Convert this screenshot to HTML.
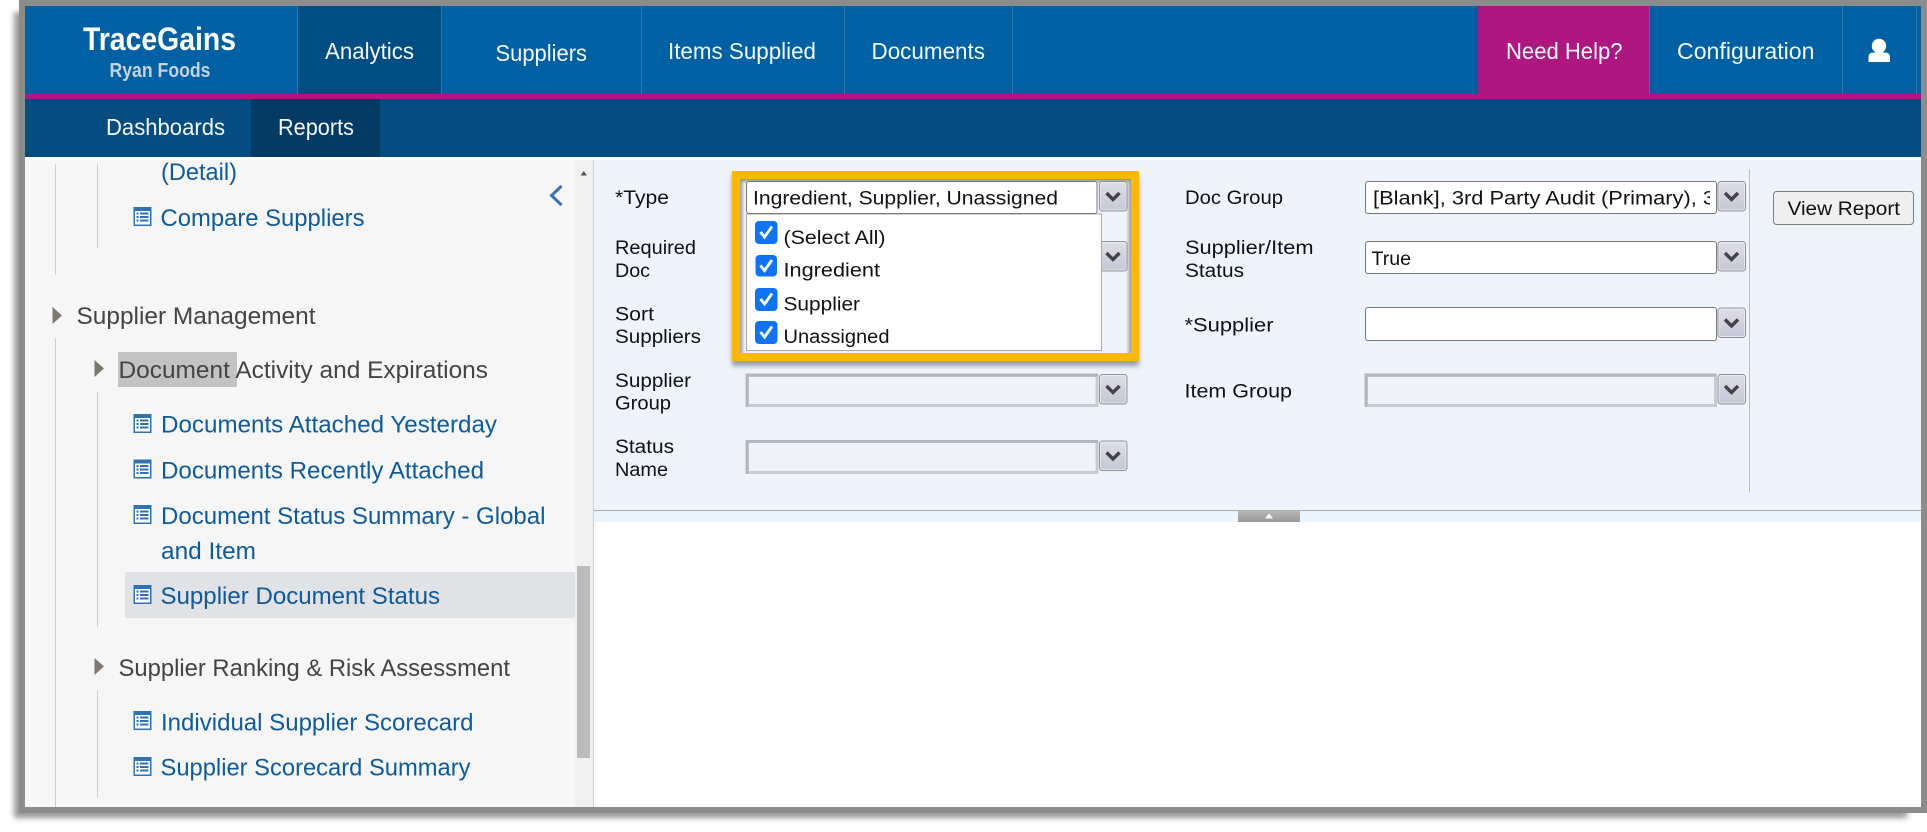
<!DOCTYPE html>
<html lang="en">
<head>
<meta charset="utf-8">
<title>TraceGains Reports</title>
<style>
html,body{margin:0;padding:0;width:1927px;height:832px;overflow:hidden;background:#fff}
svg{display:block}
text{font-family:"Liberation Sans",Arial,sans-serif;white-space:pre}
.nav{font-size:23.5px;fill:#f4f8fb}
.lnk{font-size:24.5px;fill:#0d5a9c}
.hd{font-size:24.5px;fill:#444}
.lb{font-size:19px;fill:#111}
</style>
</head>
<body>
<svg xmlns="http://www.w3.org/2000/svg" width="1927" height="832" viewBox="0 0 1927 832">
<defs>
<filter id="bl" x="-2%" y="-3%" width="104%" height="106%"><feGaussianBlur stdDeviation="3"/></filter>
<filter id="bl2" x="-5%" y="-10%" width="110%" height="120%"><feGaussianBlur stdDeviation="2.5"/></filter>
<linearGradient id="gd" x1="0" y1="0" x2="0" y2="1"><stop offset="0" stop-color="#8f8f8f"/><stop offset="1" stop-color="#8f8f8f" stop-opacity="0"/></linearGradient>
<linearGradient id="gl" x1="0" y1="0" x2="1" y2="0"><stop offset="0" stop-color="#a0a0a0"/><stop offset="1" stop-color="#a0a0a0" stop-opacity="0"/></linearGradient>
<linearGradient id="gr" x1="1" y1="0" x2="0" y2="0"><stop offset="0" stop-color="#a0a0a0"/><stop offset="1" stop-color="#a0a0a0" stop-opacity="0"/></linearGradient>
<linearGradient id="tg" x1="0" y1="0" x2="0" y2="1"><stop offset="0" stop-color="#b8b8b8"/><stop offset="1" stop-color="#989898"/></linearGradient>
<linearGradient id="ab" x1="0" y1="0" x2="0" y2="1"><stop offset="0" stop-color="#dedee8"/><stop offset="1" stop-color="#c6c7d6"/></linearGradient>
<clipPath id="dg"><rect x="1366" y="182" width="344" height="30"/></clipPath>
<g id="ic">
<rect x="0" y="0" width="18" height="19" fill="#2f72b4"/>
<rect x="1.5" y="4" width="15" height="13.5" fill="#fff"/>
<rect x="3" y="5.5" width="2" height="2" fill="#2f72b4"/><rect x="6.5" y="5.5" width="8.5" height="2" fill="#2f72b4"/>
<rect x="3" y="9" width="2" height="2" fill="#2f72b4"/><rect x="6.5" y="9" width="8.5" height="2" fill="#2f72b4"/>
<rect x="3" y="12.5" width="2" height="2" fill="#2f72b4"/><rect x="6.5" y="12.5" width="8.5" height="2" fill="#2f72b4"/>
</g>
<g id="ab1">
<rect x="0.5" y="0.5" width="27.5" height="29.5" rx="3" fill="url(#ab)" stroke="#8f9097"/>
<rect x="1.5" y="1.5" width="25.5" height="27.5" rx="2" fill="none" stroke="#f2f2f6" stroke-opacity=".7"/>
<path d="M7.5 12 L14 18.5 L20.5 12" fill="none" stroke="#424248" stroke-width="3.4"/>
</g>
</defs>

<!-- frame + drop shadow -->
<rect x="14" y="12" width="1893" height="806" fill="#999" filter="url(#bl)"/>
<rect x="19" y="0" width="1908" height="813" fill="#8c8c8c"/>
<rect x="25" y="6" width="1896" height="801" fill="#fff"/>

<!-- top nav -->
<rect x="25" y="6" width="1896" height="88" fill="#0060a4"/>
<rect x="298" y="6" width="143" height="88" fill="#004d82"/>
<rect x="1478" y="6" width="171" height="88" fill="#ae1680"/>
<rect x="25" y="94" width="1896" height="5" fill="#ae1680"/>
<g fill="#3277ad">
<rect x="297" y="6" width="1" height="88"/><rect x="441" y="6" width="1" height="88"/>
<rect x="641" y="6" width="1" height="88"/><rect x="844" y="6" width="1" height="88"/>
<rect x="1012" y="6" width="1" height="88"/><rect x="1649" y="6" width="1" height="88"/>
<rect x="1842" y="6" width="1" height="88"/><rect x="1916" y="6" width="1" height="88"/>
</g>
<text x="83" y="50" font-size="32.5" font-weight="bold" fill="#fff" textLength="153" lengthAdjust="spacingAndGlyphs">TraceGains</text>
<text x="109.5" y="77" font-size="20" font-weight="bold" fill="#c6d3df" textLength="101" lengthAdjust="spacingAndGlyphs">Ryan Foods</text>
<text class="nav" x="325" y="59" textLength="89" lengthAdjust="spacingAndGlyphs">Analytics</text>
<text class="nav" x="495.5" y="61" textLength="91.5" lengthAdjust="spacingAndGlyphs">Suppliers</text>
<text class="nav" x="668" y="59" textLength="148" lengthAdjust="spacingAndGlyphs">Items Supplied</text>
<text class="nav" x="871.5" y="59" textLength="113.5" lengthAdjust="spacingAndGlyphs">Documents</text>
<text class="nav" x="1506" y="59" textLength="116.5" lengthAdjust="spacingAndGlyphs">Need Help?</text>
<text class="nav" x="1677" y="59" textLength="137.5" lengthAdjust="spacingAndGlyphs">Configuration</text>
<circle cx="1879" cy="46" r="7.2" fill="#fff"/>
<path d="M1868.5 62 V57 Q1868.5 52.5 1873.5 52.5 H1884.5 Q1890 52.5 1890 57 V62 Z" fill="#fff"/>

<!-- sub nav -->
<rect x="25" y="99" width="1896" height="58" fill="#054c80"/>
<rect x="251" y="99" width="129" height="58" fill="#033b64"/>
<text class="nav" x="106" y="135" textLength="119" lengthAdjust="spacingAndGlyphs">Dashboards</text>
<text class="nav" x="278" y="135" textLength="76" lengthAdjust="spacingAndGlyphs">Reports</text>

<!-- sidebar -->
<rect x="25" y="160" width="550" height="647" fill="#f6f6f6"/>
<rect x="575" y="160" width="18" height="647" fill="#f0f0f0"/>
<rect x="593" y="160" width="1" height="647" fill="#d0d0d0"/>
<path d="M580.5 175.5 L583.8 171 L587 175.5 Z" fill="#555"/>
<rect x="577" y="566" width="13" height="192" fill="#bcbcbc"/>
<path d="M561.5 186 L551.5 195.5 L561.5 205" fill="none" stroke="#3a74b2" stroke-width="3"/>
<g fill="#cfcfcf">
<rect x="55" y="164" width="1" height="111"/>
<rect x="97" y="164" width="1" height="84"/>
<rect x="55" y="338" width="1" height="469"/>
<rect x="97" y="392" width="1" height="235"/>
<rect x="97" y="690" width="1" height="108"/>
</g>
<rect x="118" y="352" width="119" height="35" fill="#c3c3c3"/>
<rect x="125" y="572" width="450" height="46" fill="#e1e2e5"/>

<g fill="#7d7870">
<path d="M52.5 307 L62 315.5 L52.5 324 Z"/>
<path d="M94.5 360 L104 368.5 L94.5 377 Z"/>
<path d="M94.5 658 L104 666.5 L94.5 675 Z"/>
</g>

<text class="lnk" x="161" y="180" textLength="76" lengthAdjust="spacingAndGlyphs">(Detail)</text>
<use href="#ic" x="133.5" y="207"/>
<text class="lnk" x="160.5" y="226" textLength="204" lengthAdjust="spacingAndGlyphs">Compare Suppliers</text>
<text class="hd" x="76.5" y="324" textLength="239" lengthAdjust="spacingAndGlyphs">Supplier Management</text>
<text class="hd" x="118.5" y="378" textLength="369.5" lengthAdjust="spacingAndGlyphs">Document Activity and Expirations</text>
<use href="#ic" x="133.5" y="414"/>
<text class="lnk" x="161" y="432.5" textLength="336" lengthAdjust="spacingAndGlyphs">Documents Attached Yesterday</text>
<use href="#ic" x="133.5" y="459.5"/>
<text class="lnk" x="161" y="478.5" textLength="323" lengthAdjust="spacingAndGlyphs">Documents Recently Attached</text>
<use href="#ic" x="133.5" y="505"/>
<text class="lnk" x="161" y="524" textLength="384.5" lengthAdjust="spacingAndGlyphs">Document Status Summary - Global</text>
<text class="lnk" x="161" y="559" textLength="95" lengthAdjust="spacingAndGlyphs">and Item</text>
<use href="#ic" x="133.5" y="585"/>
<text class="lnk" x="160.5" y="604" textLength="279.5" lengthAdjust="spacingAndGlyphs">Supplier Document Status</text>
<text class="hd" x="118.5" y="676" textLength="391.5" lengthAdjust="spacingAndGlyphs">Supplier Ranking &amp; Risk Assessment</text>
<use href="#ic" x="133.5" y="711"/>
<text class="lnk" x="161" y="730.5" textLength="312.5" lengthAdjust="spacingAndGlyphs">Individual Supplier Scorecard</text>
<use href="#ic" x="133.5" y="757"/>
<text class="lnk" x="160.5" y="775.5" textLength="310" lengthAdjust="spacingAndGlyphs">Supplier Scorecard Summary</text>

<!-- filter panel -->
<rect x="594" y="160" width="1327" height="350" fill="#eff3fb"/>
<rect x="594" y="510" width="1327" height="1" fill="#ababab"/>
<rect x="594" y="511" width="1327" height="11" fill="#ebf5fd"/>
<rect x="1238" y="511" width="62" height="11" fill="url(#tg)"/>
<path d="M1265 518.5 L1269 513.5 L1273 518.5 Z" fill="#fff"/>
<rect x="1749" y="169" width="1" height="323" fill="#b9bcc0"/>

<!-- labels left -->
<text class="lb" x="615" y="204" textLength="54" lengthAdjust="spacingAndGlyphs">*Type</text>
<text class="lb" x="615" y="254" textLength="81" lengthAdjust="spacingAndGlyphs">Required</text>
<text class="lb" x="615" y="277" textLength="35" lengthAdjust="spacingAndGlyphs">Doc</text>
<text class="lb" x="615" y="320.5" textLength="39" lengthAdjust="spacingAndGlyphs">Sort</text>
<text class="lb" x="615" y="343" textLength="86" lengthAdjust="spacingAndGlyphs">Suppliers</text>
<text class="lb" x="615" y="387" textLength="76" lengthAdjust="spacingAndGlyphs">Supplier</text>
<text class="lb" x="615" y="409.5" textLength="56" lengthAdjust="spacingAndGlyphs">Group</text>
<text class="lb" x="615" y="453" textLength="59" lengthAdjust="spacingAndGlyphs">Status</text>
<text class="lb" x="615" y="476" textLength="53" lengthAdjust="spacingAndGlyphs">Name</text>

<!-- labels right -->
<text class="lb" x="1185" y="204" textLength="98" lengthAdjust="spacingAndGlyphs">Doc Group</text>
<text class="lb" x="1185" y="254" textLength="128.5" lengthAdjust="spacingAndGlyphs">Supplier/Item</text>
<text class="lb" x="1185" y="277" textLength="59" lengthAdjust="spacingAndGlyphs">Status</text>
<text class="lb" x="1184.5" y="331.5" textLength="89" lengthAdjust="spacingAndGlyphs">*Supplier</text>
<text class="lb" x="1184.5" y="397.5" textLength="107.5" lengthAdjust="spacingAndGlyphs">Item Group</text>

<!-- disabled fields -->
<rect x="747.5" y="375.5" width="349.5" height="30" fill="#eff2f9" stroke="#c8ccd1" stroke-width="3"/>
<path d="M747 407 V375 H1098" fill="none" stroke="#b4b7bc" stroke-width="3"/>
<use href="#ab1" x="1099" y="374"/>
<rect x="747.5" y="441.5" width="349.5" height="31" fill="#eff2f9" stroke="#c8ccd1" stroke-width="3"/>
<path d="M747 474 V441.5 H1098" fill="none" stroke="#b4b7bc" stroke-width="3"/>
<use href="#ab1" x="1099" y="440.5"/>
<rect x="1366.5" y="375.5" width="349" height="30" fill="#eff2f9" stroke="#c8ccd1" stroke-width="3"/>
<path d="M1366 407 V375 H1716.5" fill="none" stroke="#b4b7bc" stroke-width="3"/>
<use href="#ab1" x="1717.5" y="374"/>

<!-- right fields -->
<rect x="1365.5" y="181.5" width="351" height="32" rx="2.5" fill="#fff" stroke="#777"/>
<text clip-path="url(#dg)" x="1373" y="204.5" font-size="19" fill="#111" textLength="342" lengthAdjust="spacingAndGlyphs">[Blank], 3rd Party Audit (Primary), 3</text>
<use href="#ab1" x="1717.5" y="181"/>
<rect x="1365.5" y="241.5" width="351" height="32" rx="2.5" fill="#fff" stroke="#777"/>
<text class="lb" x="1371.5" y="265" textLength="39.5" lengthAdjust="spacingAndGlyphs">True</text>
<use href="#ab1" x="1717.5" y="241"/>
<rect x="1365.5" y="307.5" width="351" height="33" rx="2.5" fill="#fff" stroke="#777"/>
<use href="#ab1" x="1717.5" y="307.5"/>

<!-- view report -->
<rect x="1773.5" y="191.5" width="140" height="33" rx="3" fill="#efefef" stroke="#7d7d7d"/>
<text class="lb" x="1787.5" y="215" textLength="112.5" lengthAdjust="spacingAndGlyphs">View Report</text>

<!-- highlight callout -->
<rect x="732" y="175" width="407" height="191" fill="#555" fill-opacity=".55" filter="url(#bl2)"/>
<rect x="732" y="171" width="407" height="190" fill="#fcb900"/>
<rect x="740" y="179" width="391" height="174" fill="#eff3fb"/>
<rect x="740" y="179" width="391" height="5" fill="url(#gd)"/>
<rect x="740" y="179" width="5" height="174" fill="url(#gl)"/>
<rect x="1126" y="179" width="5" height="174" fill="url(#gr)"/>

<use href="#ab1" x="1099" y="181"/>
<use href="#ab1" x="1099" y="241"/>
<rect x="746.5" y="214" width="355" height="136.5" fill="#fff" stroke="#a9a9a9"/>
<rect x="746.5" y="181.5" width="350.5" height="32" rx="2.5" fill="#fff" stroke="#777"/>
<text class="lb" x="753" y="204.5" textLength="305" lengthAdjust="spacingAndGlyphs">Ingredient, Supplier, Unassigned</text>

<g>
<rect x="755" y="221" width="22.5" height="23" rx="4" fill="#0f73f5"/>
<path d="M760.5 232 L764.5 237 L772 226.5" fill="none" stroke="#fff" stroke-width="2.8"/>
<rect x="755.5" y="255" width="21.5" height="21.5" rx="4" fill="#0f73f5"/>
<path d="M760.5 265.5 L764.5 270.5 L772 260" fill="none" stroke="#fff" stroke-width="2.8"/>
<rect x="755" y="288" width="22.5" height="23" rx="4" fill="#0f73f5"/>
<path d="M760.5 299 L764.5 304 L772 293.5" fill="none" stroke="#fff" stroke-width="2.8"/>
<rect x="755" y="321" width="22.5" height="23" rx="4" fill="#0f73f5"/>
<path d="M760.5 332 L764.5 337 L772 326.5" fill="none" stroke="#fff" stroke-width="2.8"/>
</g>
<text class="lb" x="783.5" y="244" textLength="102" lengthAdjust="spacingAndGlyphs">(Select All)</text>
<text class="lb" x="783.5" y="276.5" textLength="96.5" lengthAdjust="spacingAndGlyphs">Ingredient</text>
<text class="lb" x="783.5" y="310.5" textLength="76.5" lengthAdjust="spacingAndGlyphs">Supplier</text>
<text class="lb" x="783.5" y="343" textLength="106" lengthAdjust="spacingAndGlyphs">Unassigned</text>
</svg>
</body>
</html>
